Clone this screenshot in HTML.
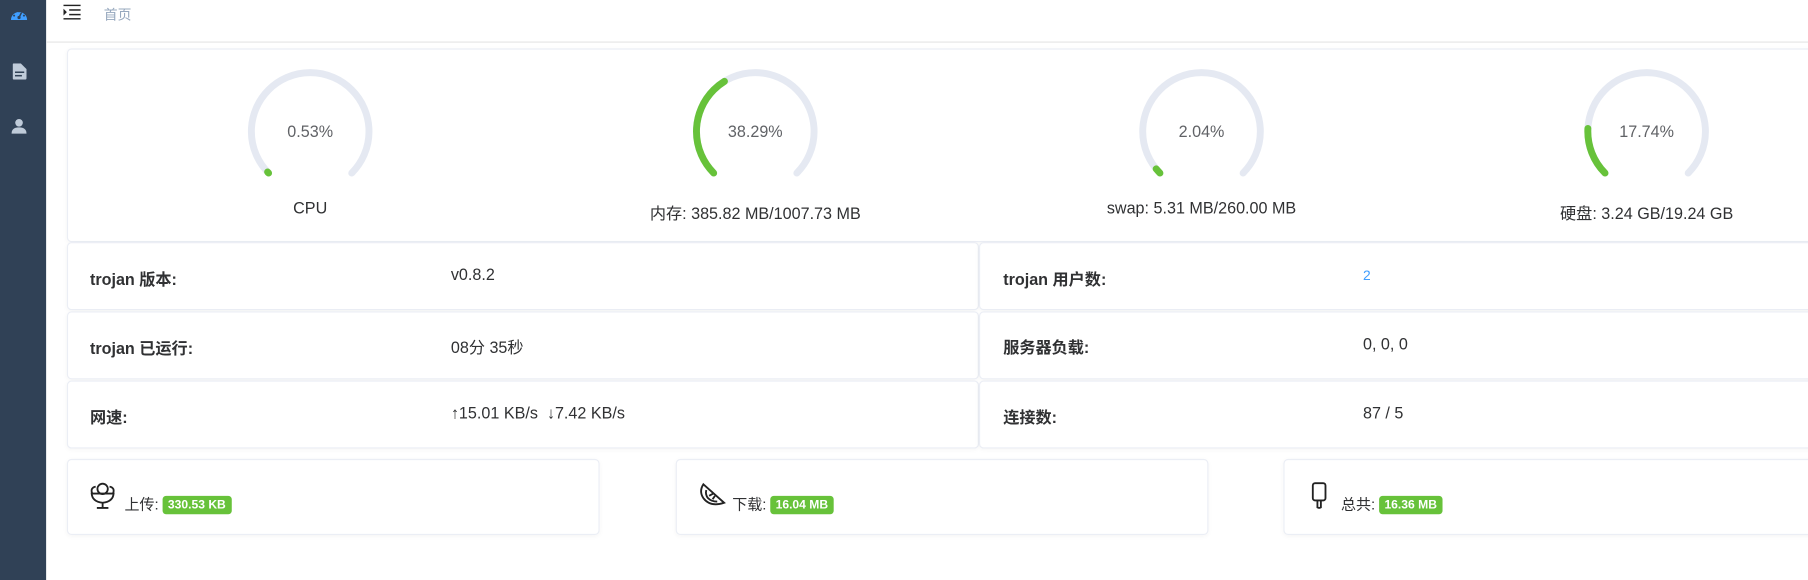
<!DOCTYPE html>
<html><head><meta charset="utf-8">
<style>
html,body{margin:0;padding:0;width:1808px;height:580px;overflow:hidden;background:#fff}
#w{position:absolute;left:0;top:0;width:1568px;height:503px;transform:scale(1.1531);transform-origin:0 0;font-family:"Liberation Sans","Noto Sans CJK SC",sans-serif;color:#303133}
.abs{position:absolute}
.side{left:0;top:0;width:40px;height:503px;background:#304156}
.card{position:absolute;border:1px solid #ebeef5;border-radius:4px;background:#fff;box-shadow:0 1px 4px rgba(0,0,0,0.04)}
.lbl{position:absolute;font-size:14px;font-weight:bold;color:#303133}
.val{position:absolute;font-size:14px;color:#303133}
.gl{position:absolute;width:300px;text-align:center;font-size:14px;color:#303133}
.gp{position:absolute;width:100px;text-align:center;font-size:14px;color:#606266}
.badge{display:inline-block;background:#67c23a;color:#fff;font-size:10.5px;font-weight:bold;padding:2px 5px;border-radius:3px;vertical-align:1px;margin-left:3px}
.bt{position:absolute;font-size:13px;color:#303133}
</style></head><body><div id="w">
<div class="abs side"></div>
<svg class="abs" style="left:9px;top:7px" width="15" height="11" viewBox="0 0 14 10"><path d="M0.5 9.5 A6.5 6.5 0 1 1 13.5 9.5 Z" fill="#409eff"/><circle cx="7" cy="7.5" r="1.3" fill="#304156"/><path d="M7 7.5 L9 3.5" stroke="#304156" stroke-width="1.2"/><circle cx="3" cy="6" r=".8" fill="#304156"/><circle cx="11" cy="6" r=".8" fill="#304156"/><circle cx="7" cy="2.5" r=".8" fill="#304156"/></svg>
<svg class="abs" style="left:11px;top:55px" width="12" height="14" viewBox="0 0 12 14"><path d="M0 1 Q0 0 1 0 H7 L12 5 V13 Q12 14 11 14 H1 Q0 14 0 13Z" fill="#bfcbd9"/><rect x="2" y="7" width="8" height="1.3" fill="#304156"/><rect x="2" y="10" width="6" height="1.3" fill="#304156"/></svg>
<svg class="abs" style="left:10px;top:103px" width="13" height="13" viewBox="0 0 13 13"><circle cx="6.5" cy="3.5" r="3.3" fill="#bfcbd9"/><path d="M0 13 Q0 7.5 6.5 7.5 Q13 7.5 13 13Z" fill="#bfcbd9"/></svg>
<svg class="abs" style="left:55px;top:4px" width="15" height="13" viewBox="0 0 15 13"><rect x="0" y="0" width="15" height="1.3" fill="#222"/><rect x="5" y="4" width="10" height="1.3" fill="#222"/><rect x="5" y="8" width="10" height="1.3" fill="#222"/><rect x="0" y="11.7" width="15" height="1.3" fill="#222"/><path d="M0 3.5 L3 6.5 L0 9.5Z" fill="#222"/></svg>
<div class="abs" style="left:90px;top:4px;font-size:12px;color:#97a8be">首页</div>
<div class="abs" style="left:40px;top:36px;width:1528px;height:1px;background:#e6e6e6"></div>

<div class="card" style="left:58px;top:42px;width:1540px;height:166px"></div>
<svg class="abs" style="left:0;top:0" width="1568" height="210">
<g fill="none" stroke-width="6" stroke-linecap="round">
<g transform="translate(269,114) rotate(135)"><circle r="51" stroke="#e5e9f2" stroke-dasharray="240.3 400"/><circle r="51" stroke="#67c23a" stroke-dasharray="1.3 400"/></g>
<g transform="translate(655,114) rotate(135)"><circle r="51" stroke="#e5e9f2" stroke-dasharray="240.3 400"/><circle r="51" stroke="#67c23a" stroke-dasharray="92 400"/></g>
<g transform="translate(1042,114) rotate(135)"><circle r="51" stroke="#e5e9f2" stroke-dasharray="240.3 400"/><circle r="51" stroke="#67c23a" stroke-dasharray="4.9 400"/></g>
<g transform="translate(1428,114) rotate(135)"><circle r="51" stroke="#e5e9f2" stroke-dasharray="240.3 400"/><circle r="51" stroke="#67c23a" stroke-dasharray="42.6 400"/></g>
</g></svg>
<div class="gp" style="left:219px;top:106px">0.53%</div>
<div class="gp" style="left:605px;top:106px">38.29%</div>
<div class="gp" style="left:992px;top:106px">2.04%</div>
<div class="gp" style="left:1378px;top:106px">17.74%</div>
<div class="gl" style="left:119px;top:172px">CPU</div>
<div class="gl" style="left:505px;top:175px">内存: 385.82 MB/1007.73 MB</div>
<div class="gl" style="left:892px;top:172px">swap: 5.31 MB/260.00 MB</div>
<div class="gl" style="left:1278px;top:175px">硬盘: 3.24 GB/19.24 GB</div>

<div class="card" style="left:58px;top:210px;width:789px;height:57px"></div>
<div class="card" style="left:849px;top:210px;width:789px;height:57px"></div>
<div class="card" style="left:58px;top:270px;width:789px;height:57px"></div>
<div class="card" style="left:849px;top:270px;width:789px;height:57px"></div>
<div class="card" style="left:58px;top:330px;width:789px;height:57px"></div>
<div class="card" style="left:849px;top:330px;width:789px;height:57px"></div>
<div class="lbl" style="left:78px;top:232px">trojan 版本:</div>
<div class="val" style="left:391px;top:230px">v0.8.2</div>
<div class="lbl" style="left:870px;top:232px">trojan 用户数:</div>
<div class="val" style="left:1182px;top:232px;font-size:12px;color:#409eff">2</div>
<div class="lbl" style="left:78px;top:292px">trojan 已运行:</div>
<div class="val" style="left:391px;top:291px">08分 35秒</div>
<div class="lbl" style="left:870px;top:291px">服务器负载:</div>
<div class="val" style="left:1182px;top:290px">0, 0, 0</div>
<div class="lbl" style="left:78px;top:352px">网速:</div>
<div class="val" style="left:391px;top:350px">↑15.01 KB/s &nbsp;↓7.42 KB/s</div>
<div class="lbl" style="left:870px;top:352px">连接数:</div>
<div class="val" style="left:1182px;top:350px">87 / 5</div>

<div class="card" style="left:58px;top:398px;width:460px;height:64px"></div>
<div class="card" style="left:586px;top:398px;width:460px;height:64px"></div>
<div class="card" style="left:1113px;top:398px;width:460px;height:64px"></div>
<svg class="abs" style="left:78px;top:418px" width="22" height="24" viewBox="0 0 22 24" fill="none" stroke="#222" stroke-width="1.6"><circle cx="11" cy="6" r="4.5"/><path d="M2 10 Q0 5 5 4 M20 10 Q22 5 17 4"/><path d="M1.5 10 H20.5 Q20 17 11 18 Q2 17 1.5 10Z"/><path d="M11 18 V22 M6 22.5 H16"/></svg>
<div class="bt" style="left:108px;top:427px">上传:<span class="badge">330.53 KB</span></div>
<svg class="abs" style="left:606px;top:418px" width="24" height="22" viewBox="0 0 24 22" fill="none" stroke="#222" stroke-width="1.6"><path d="M4 2 L22 18 Q10 22 4 14 Q0 8 4 2Z"/><path d="M6.5 7 Q5.5 11 8 14 Q11 17 16 17"/><path d="M9 12 L12.5 10 M12 15 L14 12"/></svg>
<div class="bt" style="left:635px;top:427px">下载:<span class="badge">16.04 MB</span></div>
<svg class="abs" style="left:1137px;top:418px" width="14" height="24" viewBox="0 0 14 24" fill="none" stroke="#222" stroke-width="1.6"><rect x="1.5" y="1" width="11" height="15" rx="2"/><path d="M5.5 16 V22 Q7 23 8.5 22 V16"/></svg>
<div class="bt" style="left:1163px;top:427px">总共:<span class="badge">16.36 MB</span></div>
</div></body></html>
